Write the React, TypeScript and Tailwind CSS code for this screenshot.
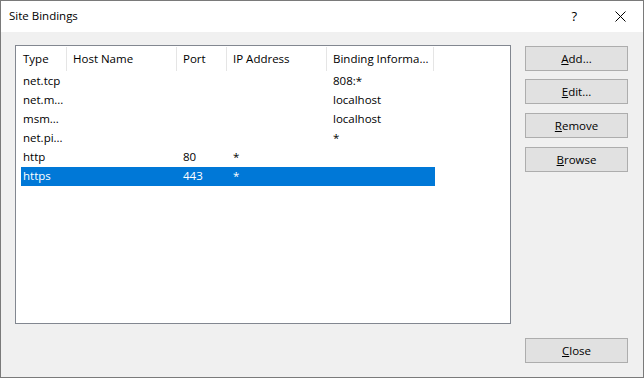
import React from "react";

const columns = [
  { label: "Type", width: "w-[51px]", pad: "pl-[7px]" },
  { label: "Host Name", width: "w-[110px]", pad: "pl-[6px]" },
  { label: "Port", width: "w-[50px]", pad: "pl-[6px]" },
  { label: "IP Address", width: "w-[100px]", pad: "pl-[6px]" },
  { label: "Binding Informa...", width: "w-[107px]", pad: "pl-[6px]" },
];

const rows = [
  { type: "net.tcp", host: "", port: "", ip: "", info: "808:*" },
  { type: "net.m...", host: "", port: "", ip: "", info: "localhost" },
  { type: "msm...", host: "", port: "", ip: "", info: "localhost" },
  { type: "net.pi...", host: "", port: "", ip: "", info: "*" },
  { type: "http", host: "", port: "80", ip: "*", info: "" },
  { type: "https", host: "", port: "443", ip: "*", info: "", selected: true },
];

function DlgButton({ label, mnemonic, className = "" }: { label: string; mnemonic: number; className?: string }) {
  return (
    <button
      className={`w-[103px] h-[25px] bg-[#e1e1e1] border border-[#adadad] text-[11.5px] text-black leading-none flex items-center justify-center ${className}`}
    >
      <span>
        {label.slice(0, mnemonic)}
        <span className="underline underline-offset-[1px]">{label[mnemonic]}</span>
        {label.slice(mnemonic + 1)}
      </span>
    </button>
  );
}

export default function App() {
  return (
    <div className="w-[644px] h-[378px] font-['Segoe_UI','Open_Sans',sans-serif] text-black bg-[#f0f0f0] border border-[#7a7a7a] flex flex-col overflow-hidden">
      {/* Title bar */}
      <div className="h-[31px] bg-white flex items-center shrink-0">
        <span className="pl-[8px] pb-[1px] text-[11.5px] flex-1">Site Bindings</span>
        <span className="text-[13px] mr-[38px] leading-none">?</span>
        <svg width="11" height="11" viewBox="0 0 11 11" className="mr-[17px]">
          <path d="M0.5 0.5 L10.5 10.5 M10.5 0.5 L0.5 10.5" stroke="#000" strokeWidth="1" />
        </svg>
      </div>

      {/* Body */}
      <div className="flex flex-1 pl-[14px] pt-[13px]">
        <div className="w-[496px] h-[279px] bg-white border border-[#828790] text-[11.5px]">
          {/* Header */}
          <div className="flex h-[26px]">
            {columns.map((c) => (
              <div key={c.label} className={`${c.width} ${c.pad} pb-[1px] flex items-center border-r border-[#e5e5e5] my-[1px] whitespace-nowrap`}>
                {c.label}
              </div>
            ))}
          </div>
          {/* Rows */}
          <div className="flex flex-col">
            {rows.map((r) => (
              <div
                key={r.type}
                className={`flex h-[19px] pb-[1px] items-center ml-[5px] w-[414px] ${r.selected ? "bg-[#0078d7] text-white" : ""}`}
              >
                <div className="w-[46px] pl-[2px] whitespace-nowrap">{r.type}</div>
                <div className="w-[110px] pl-[6px]">{r.host}</div>
                <div className="w-[50px] pl-[6px]">{r.port}</div>
                <div className="w-[100px] pl-[6px]">{r.ip}</div>
                <div className="w-[108px] pl-[6px] whitespace-nowrap">{r.info}</div>
              </div>
            ))}
          </div>
        </div>

        {/* Buttons */}
        <div className="flex flex-col ml-[14px] pt-[1px]">
          <DlgButton label="Add..." mnemonic={0} />
          <DlgButton label="Edit..." mnemonic={0} className="mt-[8px]" />
          <DlgButton label="Remove" mnemonic={0} className="mt-[9px]" />
          <DlgButton label="Browse" mnemonic={0} className="mt-[9px]" />
          <div className="flex-1" />
          <DlgButton label="Close" mnemonic={0} className="mb-[14px]" />
        </div>
      </div>
    </div>
  );
}
